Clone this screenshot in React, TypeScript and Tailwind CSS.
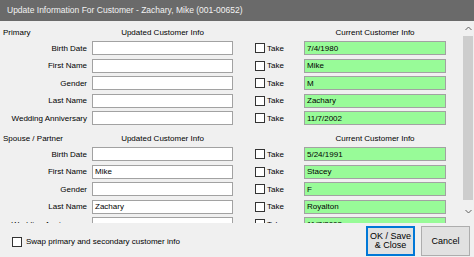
import React from 'react';

const primary = [
  { label: 'Birth Date', value: '', current: '7/4/1980' },
  { label: 'First Name', value: '', current: 'Mike' },
  { label: 'Gender', value: '', current: 'M' },
  { label: 'Last Name', value: '', current: 'Zachary' },
  { label: 'Wedding Anniversary', value: '', current: '11/7/2002' },
];

const spouse = [
  { label: 'Birth Date', value: '', current: '5/24/1991' },
  { label: 'First Name', value: 'Mike', current: 'Stacey' },
  { label: 'Gender', value: '', current: 'F' },
  { label: 'Last Name', value: 'Zachary', current: 'Royalton' },
  { label: 'Wedding Anniversary', value: '', current: '11/7/2002' },
];

const CheckBox = () => (
  <span className="block w-[10px] h-[10px] border border-[#333333] bg-white shrink-0" />
);

const Section = ({ title, rows }: { title: string; rows: typeof primary }) => (
  <div className="flex flex-col">
    <div className="flex items-end h-[18.5px] pb-[3px]">
      <div className="w-[92px] pl-[3px]">{title}</div>
      <div className="w-[141px] text-center">Updated Customer Info</div>
      <div className="w-[71px]" />
      <div className="w-[142px] text-center">Current Customer Info</div>
    </div>
    {rows.map((r) => (
      <div key={r.label} className="flex items-start h-[17.5px]">
        <div className="w-[92px] pr-[5px] text-right whitespace-nowrap h-[14px] flex items-center justify-end">
          {r.label}
        </div>
        <div className="w-[141px] h-[14px] bg-white border border-[#a2a2a2] pl-[2px] flex items-center">
          {r.value}
        </div>
        <div className="w-[22px]" />
        <div className="w-[49px] h-[14px] flex items-center gap-[2px]">
          <CheckBox />
          <span>Take</span>
        </div>
        <div className="w-[142px] h-[14px] bg-[#98fb98] border border-[#a2a2a2] pl-[2px] flex items-center">
          {r.current}
        </div>
      </div>
    ))}
  </div>
);

export default function App() {
  return (
    <div
      className="w-[474px] h-[257px] bg-[#f0f0f0] text-black text-[8px] leading-[11px] flex flex-col overflow-hidden"
      style={{ fontFamily: '"Liberation Sans", Arial, sans-serif' }}
    >
      <div className="h-[21px] shrink-0 bg-[#6a6a6a] text-[#f2f2f2] text-[8.5px] flex items-center pl-[7px]">
        Update Information For Customer - Zachary, Mike (001-00652)
      </div>

      <div className="h-[202px] shrink-0 flex">
        <div className="flex-1 overflow-hidden pt-[1.5px]">
          <Section title="Primary" rows={primary} />
          <Section title="Spouse / Partner" rows={spouse} />
        </div>
        <div className="w-[12px] flex flex-col items-stretch bg-[#f0f0f0]">
          <div className="h-[15px] flex items-center justify-center">
            <svg width="7" height="5" viewBox="0 0 7 5">
              <path d="M0.5 4 L3.5 1 L6.5 4" fill="none" stroke="#606060" strokeWidth="1" />
            </svg>
          </div>
          <div className="h-[164px] mx-[1px] bg-[#cdcdcd]" />
          <div className="flex-1 flex items-center justify-center">
            <svg width="7" height="5" viewBox="0 0 7 5">
              <path d="M0.5 1 L3.5 4 L6.5 1" fill="none" stroke="#606060" strokeWidth="1" />
            </svg>
          </div>
        </div>
      </div>

      <div className="flex-1 flex items-start pt-[3px]">
        <div className="flex items-center gap-[4px] pl-[12px] mt-[10px]">
          <CheckBox />
          <span>Swap primary and secondary customer info</span>
        </div>
        <div className="ml-auto flex gap-[6px] pr-[4px]">
          <button className="w-[49px] h-[30px] bg-[#e1e1e1] border-2 border-[#0078d7] leading-[9px] text-[9px] flex flex-col items-center justify-center">
            <span>OK / Save</span>
            <span>&amp; Close</span>
          </button>
          <button className="w-[49px] h-[30px] bg-[#e1e1e1] border border-[#adadad] text-[9px] flex items-center justify-center">
            Cancel
          </button>
        </div>
      </div>
    </div>
  );
}
